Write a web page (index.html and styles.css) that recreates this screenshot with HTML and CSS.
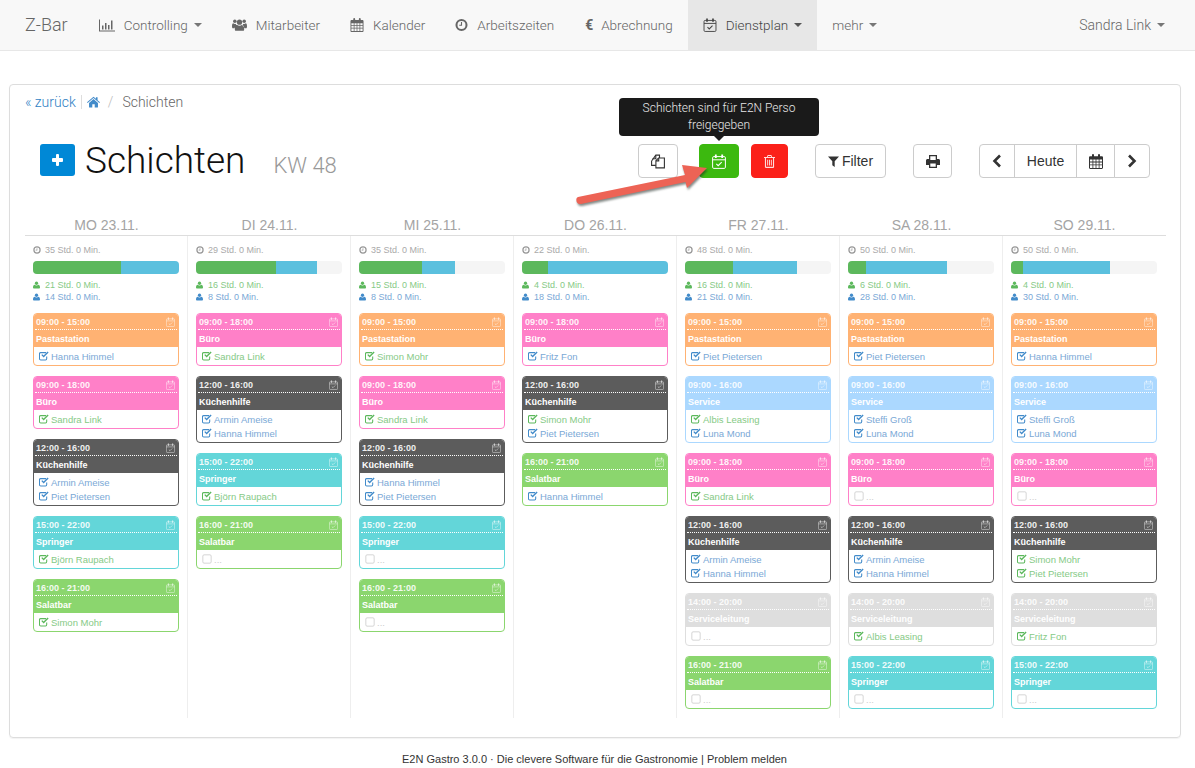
FILE: index.html
```html
<!DOCTYPE html>
<html lang="de">
<head>
<meta charset="utf-8">
<title>Schichten</title>
<link rel="stylesheet" href="styles.css">
</head>
<body>
<svg class="defs" width="0" height="0" aria-hidden="true">
  <symbol id="i-bars" viewBox="0 0 16 13"><path d="M0 1h1v11h15v1H0z"/><path d="M3 7h1.500v4H3zM6 4.500h1.500V11H6zM9 6.500h1.500V11H9zM12 2h1.500v9H12z"/></symbol>
  <symbol id="i-users" viewBox="0 0 16 14"><circle cx="8" cy="4" r="2.800"/><circle cx="3" cy="2.900" r="1.900"/><circle cx="13" cy="2.900" r="1.900"/><path d="M3.800 13c-.4 0-.8-.4-.8-1 0-3 .8-5 2.300-5.200.7.600 1.600 1 2.700 1s2-.4 2.700-1C12.200 7 13 9 13 12c0 .6-.4 1-.8 1zM0 8.500C0 6.500.5 5.200 1.400 5.200c.5.400 1 .6 1.700.6.500 0 .8-.1 1.100-.2-.1 1.200.5 1.700.8 2.200-.8.500-2 1.300-2.400 2.700H1C.4 10.500 0 9.600 0 8.500zM16 8.500c0-2-.5-3.300-1.400-3.300-.5.400-1 .6-1.700.6-.5 0-.8-.1-1.100-.2.100 1.200-.5 1.700-.8 2.200.8.500 2 1.300 2.400 2.700H15c.6 0 1-.9 1-2z"/></symbol>
  <symbol id="i-cal" viewBox="0 0 14 15"><path fill-rule="evenodd" d="M1.200 2.200H3V1a1 1 0 0 1 2 0v1.200h4V1a1 1 0 0 1 2 0v1.200h1.800c.6 0 1.200.5 1.200 1.100v10.500c0 .6-.6 1.200-1.200 1.200H1.200C.6 15 0 14.400 0 13.800V3.300C0 2.700.6 2.200 1.200 2.200zM1 5.600v2h2.500v-2zm3.300 0v2h2.300v-2zm3.100 0v2h2.300v-2zm3.100 0v2H13v-2zM1 8.400v2.100h2.500V8.400zm3.300 0v2.100h2.300V8.400zm3.100 0v2.100h2.300V8.400zm3.100 0v2.100H13V8.400zM1 11.300v2.500c0 .1.100.2.200.2h2.300v-2.700zm3.300 0V14h2.300v-2.700zm3.100 0V14h2.300v-2.700zm3.100 0V14h2.300c.1 0 .2-.1.200-.2v-2.500z"/></symbol>
  <symbol id="i-clock" viewBox="0 0 14 14"><path fill-rule="evenodd" d="M7 .5a6.500 6.500 0 1 1 0 13 6.500 6.500 0 0 1 0-13zm0 2.200a4.300 4.300 0 1 0 0 8.600 4.300 4.300 0 0 0 0-8.600z"/><path d="M6.400 3.800h1.200v3.900H4.600V6.600h1.800z"/></symbol>
  <symbol id="i-calcheck" viewBox="0 0 14 15"><g fill="none" stroke="currentColor"><rect x=".6" y="2.600" width="12.800" height="11.800" rx="1.200"/><path d="M.6 5.800h12.800"/><path stroke-width="1.800" d="M3.800.6v3.400M10.200.6v3.400"/><path stroke-width="1.100" d="M4.300 9.800l1.900 1.900 3.500-3.500"/></g></symbol>
  <symbol id="i-home" viewBox="0 0 16 14"><path d="M8 .5l3 2.600V1.300h2v3.500l3 2.600-.8.900L8 2.100.8 8.300 0 7.400z"/><path d="M8 3.300l5.500 4.800V13c0 .4-.3.700-.7.700H9.500V9.800h-3v3.900H3.200c-.4 0-.7-.3-.7-.7V8.100z"/></symbol>
  <symbol id="i-copy" viewBox="0 0 14 14"><g fill="none" stroke="currentColor" stroke-width="1.100"><path d="M.6 6.500L4.800.6h3.700v3M.6 6.500v4.400h4.200"/><path d="M4.900 6.200l2.700-2.700h5.800v9.900H4.900z"/><path d="M4.800 .8v3.500H1.500M7.700 3.700v2.700H5"/></g></symbol>
  <symbol id="i-trash" viewBox="0 0 12 14"><path fill-rule="evenodd" d="M4 0h4l.8 2H12v1.200h-1V13c0 .6-.5 1-1 1H2c-.5 0-1-.4-1-1V3.200H0V2h3.200zm.5 1L4.200 2h3.600l-.3-1zM2.200 3.200v9.600h7.600V3.200z"/><path d="M3.500 5h1v6.500h-1zM5.500 5h1v6.500h-1zM7.500 5h1v6.500h-1z"/></symbol>
  <symbol id="i-filter" viewBox="0 0 12 12"><path d="M0 .5h12L7.300 5.700V12L4.700 10V5.700z"/></symbol>
  <symbol id="i-print" viewBox="0 0 14 13"><path fill-rule="evenodd" d="M3 0h8v4h1.500c.8 0 1.500.7 1.500 1.500V10h-3v3H3v-3H0V5.500C0 4.700.7 4 1.500 4H3zm1.300 1.200V5h5.400V1.200zm0 7.300v3.300h5.400V8.500z"/></symbol>
  <symbol id="i-left" viewBox="0 0 10 14"><path fill="none" stroke="currentColor" stroke-width="2.600" d="M8 1.500L2.500 7 8 12.500"/></symbol>
  <symbol id="i-right" viewBox="0 0 10 14"><path fill="none" stroke="currentColor" stroke-width="2.600" d="M2 1.500L7.500 7 2 12.500"/></symbol>
  <symbol id="i-user" viewBox="0 0 12 12"><circle cx="6" cy="3" r="2.800"/><path d="M1.400 12C.6 12 0 11.500 0 10.700 0 8 .8 6 2.700 5.700 3.500 6.500 4.700 7 6 7s2.500-.5 3.300-1.300C11.200 6 12 8 12 10.700c0 .8-.6 1.300-1.400 1.300z"/></symbol>
  <symbol id="i-check" viewBox="0 0 13 12"><path fill="none" stroke="currentColor" stroke-width="1.400" d="M10 6.800v2.700c0 .9-.7 1.600-1.500 1.600H2.200c-.9 0-1.600-.7-1.600-1.600V3.200c0-.9.700-1.600 1.600-1.600h7"/><path d="M3 4.800l1.200-1.200L6 5.400l5.200-5.200L12.500 1.500 6 8z"/></symbol>
  <symbol id="i-box" viewBox="0 0 12 12"><rect x="1" y="1" width="10" height="10" rx="1.500" fill="none" stroke="currentColor"/></symbol>
</svg>

<nav class="navbar">
  <a class="brand">Z-Bar</a>
  <a class="nav-item"><svg class="ico w16"><use href="#i-bars"/></svg>Controlling<i class="caret"></i></a>
  <a class="nav-item"><svg class="ico w15"><use href="#i-users"/></svg>Mitarbeiter</a>
  <a class="nav-item"><svg class="ico w14"><use href="#i-cal"/></svg>Kalender</a>
  <a class="nav-item"><svg class="ico w13"><use href="#i-clock"/></svg>Arbeitszeiten</a>
  <a class="nav-item"><span class="euro">€</span>Abrechnung</a>
  <a class="nav-item active"><svg class="ico w14"><use href="#i-calcheck"/></svg>Dienstplan<i class="caret"></i></a>
  <a class="nav-item">mehr<i class="caret"></i></a>
  <a class="nav-item nav-right">Sandra Link<i class="caret"></i></a>
</nav>

<main class="panel">
  <div class="crumbs">
    <a class="link">« zurück</a><span class="crumb-bar"></span>
    <svg class="home"><use href="#i-home"/></svg>
    <span class="crumb-sep">/</span>
    <span class="crumb-cur">Schichten</span>
  </div>

  <header class="toolbar">
    <button class="add"><span class="add-h"></span><span class="add-v"></span></button>
    <h1 class="title">Schichten</h1>
    <span class="week">KW 48</span>
    <div class="actions">
      <button class="btn b-copy"><svg class="ico14"><use href="#i-copy"/></svg></button>
      <button class="btn b-green"><svg class="ico14"><use href="#i-calcheck"/></svg></button>
      <button class="btn b-red"><svg class="ico-trash"><use href="#i-trash"/></svg></button>
      <button class="btn b-filter"><svg class="ico-filter"><use href="#i-filter"/></svg>Filter</button>
      <button class="btn b-print"><svg class="ico13"><use href="#i-print"/></svg></button>
      <div class="btn-group">
        <button class="seg s-prev"><svg class="chev"><use href="#i-left"/></svg></button>
        <button class="seg s-today">Heute</button>
        <button class="seg s-cal"><svg class="ico14"><use href="#i-cal"/></svg></button>
        <button class="seg s-next"><svg class="chev"><use href="#i-right"/></svg></button>
      </div>
    </div>
    <div class="tooltip">Schichten sind für E2N Perso freigegeben</div>
    <svg class="arrow" width="150" height="60" viewBox="0 0 150 60"><path class="arrow-body" d="M3 37L110 15 107 5 132 8 112 28 110.500 22 6 44C1 45 0 38 3 37z"/></svg>
  </header>

  <div class="week-grid">
    <div class="day-head">MO 23.11.</div>
    <div class="day-head">DI 24.11.</div>
    <div class="day-head">MI 25.11.</div>
    <div class="day-head">DO 26.11.</div>
    <div class="day-head">FR 27.11.</div>
    <div class="day-head">SA 28.11.</div>
    <div class="day-head">SO 29.11.</div>

    <!-- MO -->
    <section class="day">
      <div class="total"><svg><use href="#i-clock"/></svg>35 Std. 0 Min.</div>
      <div class="bar"><span class="bar-g" style="width:60%"></span><span class="bar-b" style="width:40%"></span></div>
      <div class="sum g"><svg><use href="#i-user"/></svg>21 Std. 0 Min.</div>
      <div class="sum b"><svg><use href="#i-user"/></svg>14 Std. 0 Min.</div>
      <article class="shift orange"><div class="head"><div class="time">09:00 - 15:00<svg><use href="#i-calcheck"/></svg></div><div class="role">Pastastation</div></div><ul class="staff"><li class="b"><svg><use href="#i-check"/></svg>Hanna Himmel</li></ul></article>
      <article class="shift pink"><div class="head"><div class="time">09:00 - 18:00<svg><use href="#i-calcheck"/></svg></div><div class="role">Büro</div></div><ul class="staff"><li class="g"><svg><use href="#i-check"/></svg>Sandra Link</li></ul></article>
      <article class="shift dark"><div class="head"><div class="time">12:00 - 16:00<svg><use href="#i-calcheck"/></svg></div><div class="role">Küchenhilfe</div></div><ul class="staff"><li class="b"><svg><use href="#i-check"/></svg>Armin Ameise</li><li class="b"><svg><use href="#i-check"/></svg>Piet Pietersen</li></ul></article>
      <article class="shift teal"><div class="head"><div class="time">15:00 - 22:00<svg><use href="#i-calcheck"/></svg></div><div class="role">Springer</div></div><ul class="staff"><li class="g"><svg><use href="#i-check"/></svg>Björn Raupach</li></ul></article>
      <article class="shift green"><div class="head"><div class="time">16:00 - 21:00<svg><use href="#i-calcheck"/></svg></div><div class="role">Salatbar</div></div><ul class="staff"><li class="g"><svg><use href="#i-check"/></svg>Simon Mohr</li></ul></article>
    </section>

    <!-- DI -->
    <section class="day">
      <div class="total"><svg><use href="#i-clock"/></svg>29 Std. 0 Min.</div>
      <div class="bar"><span class="bar-g" style="width:55%"></span><span class="bar-b" style="width:28%"></span></div>
      <div class="sum g"><svg><use href="#i-user"/></svg>16 Std. 0 Min.</div>
      <div class="sum b"><svg><use href="#i-user"/></svg>8 Std. 0 Min.</div>
      <article class="shift pink"><div class="head"><div class="time">09:00 - 18:00<svg><use href="#i-calcheck"/></svg></div><div class="role">Büro</div></div><ul class="staff"><li class="g"><svg><use href="#i-check"/></svg>Sandra Link</li></ul></article>
      <article class="shift dark"><div class="head"><div class="time">12:00 - 16:00<svg><use href="#i-calcheck"/></svg></div><div class="role">Küchenhilfe</div></div><ul class="staff"><li class="b"><svg><use href="#i-check"/></svg>Armin Ameise</li><li class="b"><svg><use href="#i-check"/></svg>Hanna Himmel</li></ul></article>
      <article class="shift teal"><div class="head"><div class="time">15:00 - 22:00<svg><use href="#i-calcheck"/></svg></div><div class="role">Springer</div></div><ul class="staff"><li class="g"><svg><use href="#i-check"/></svg>Björn Raupach</li></ul></article>
      <article class="shift green"><div class="head"><div class="time">16:00 - 21:00<svg><use href="#i-calcheck"/></svg></div><div class="role">Salatbar</div></div><ul class="staff"><li class="e"><svg><use href="#i-box"/></svg>...</li></ul></article>
    </section>

    <!-- MI -->
    <section class="day">
      <div class="total"><svg><use href="#i-clock"/></svg>35 Std. 0 Min.</div>
      <div class="bar"><span class="bar-g" style="width:43%"></span><span class="bar-b" style="width:23%"></span></div>
      <div class="sum g"><svg><use href="#i-user"/></svg>15 Std. 0 Min.</div>
      <div class="sum b"><svg><use href="#i-user"/></svg>8 Std. 0 Min.</div>
      <article class="shift orange"><div class="head"><div class="time">09:00 - 15:00<svg><use href="#i-calcheck"/></svg></div><div class="role">Pastastation</div></div><ul class="staff"><li class="g"><svg><use href="#i-check"/></svg>Simon Mohr</li></ul></article>
      <article class="shift pink"><div class="head"><div class="time">09:00 - 18:00<svg><use href="#i-calcheck"/></svg></div><div class="role">Büro</div></div><ul class="staff"><li class="g"><svg><use href="#i-check"/></svg>Sandra Link</li></ul></article>
      <article class="shift dark"><div class="head"><div class="time">12:00 - 16:00<svg><use href="#i-calcheck"/></svg></div><div class="role">Küchenhilfe</div></div><ul class="staff"><li class="b"><svg><use href="#i-check"/></svg>Hanna Himmel</li><li class="b"><svg><use href="#i-check"/></svg>Piet Pietersen</li></ul></article>
      <article class="shift teal"><div class="head"><div class="time">15:00 - 22:00<svg><use href="#i-calcheck"/></svg></div><div class="role">Springer</div></div><ul class="staff"><li class="e"><svg><use href="#i-box"/></svg>...</li></ul></article>
      <article class="shift green"><div class="head"><div class="time">16:00 - 21:00<svg><use href="#i-calcheck"/></svg></div><div class="role">Salatbar</div></div><ul class="staff"><li class="e"><svg><use href="#i-box"/></svg>...</li></ul></article>
    </section>

    <!-- DO -->
    <section class="day">
      <div class="total"><svg><use href="#i-clock"/></svg>22 Std. 0 Min.</div>
      <div class="bar"><span class="bar-g" style="width:18%"></span><span class="bar-b" style="width:82%"></span></div>
      <div class="sum g"><svg><use href="#i-user"/></svg>4 Std. 0 Min.</div>
      <div class="sum b"><svg><use href="#i-user"/></svg>18 Std. 0 Min.</div>
      <article class="shift pink"><div class="head"><div class="time">09:00 - 18:00<svg><use href="#i-calcheck"/></svg></div><div class="role">Büro</div></div><ul class="staff"><li class="b"><svg><use href="#i-check"/></svg>Fritz Fon</li></ul></article>
      <article class="shift dark"><div class="head"><div class="time">12:00 - 16:00<svg><use href="#i-calcheck"/></svg></div><div class="role">Küchenhilfe</div></div><ul class="staff"><li class="g"><svg><use href="#i-check"/></svg>Simon Mohr</li><li class="b"><svg><use href="#i-check"/></svg>Piet Pietersen</li></ul></article>
      <article class="shift green"><div class="head"><div class="time">16:00 - 21:00<svg><use href="#i-calcheck"/></svg></div><div class="role">Salatbar</div></div><ul class="staff"><li class="b"><svg><use href="#i-check"/></svg>Hanna Himmel</li></ul></article>
    </section>

    <!-- FR -->
    <section class="day">
      <div class="total"><svg><use href="#i-clock"/></svg>48 Std. 0 Min.</div>
      <div class="bar"><span class="bar-g" style="width:33%"></span><span class="bar-b" style="width:44%"></span></div>
      <div class="sum g"><svg><use href="#i-user"/></svg>16 Std. 0 Min.</div>
      <div class="sum b"><svg><use href="#i-user"/></svg>21 Std. 0 Min.</div>
      <article class="shift orange"><div class="head"><div class="time">09:00 - 15:00<svg><use href="#i-calcheck"/></svg></div><div class="role">Pastastation</div></div><ul class="staff"><li class="b"><svg><use href="#i-check"/></svg>Piet Pietersen</li></ul></article>
      <article class="shift sky"><div class="head"><div class="time">09:00 - 16:00<svg><use href="#i-calcheck"/></svg></div><div class="role">Service</div></div><ul class="staff"><li class="g"><svg><use href="#i-check"/></svg>Albis Leasing</li><li class="b"><svg><use href="#i-check"/></svg>Luna Mond</li></ul></article>
      <article class="shift pink"><div class="head"><div class="time">09:00 - 18:00<svg><use href="#i-calcheck"/></svg></div><div class="role">Büro</div></div><ul class="staff"><li class="g"><svg><use href="#i-check"/></svg>Sandra Link</li></ul></article>
      <article class="shift dark"><div class="head"><div class="time">12:00 - 16:00<svg><use href="#i-calcheck"/></svg></div><div class="role">Küchenhilfe</div></div><ul class="staff"><li class="b"><svg><use href="#i-check"/></svg>Armin Ameise</li><li class="b"><svg><use href="#i-check"/></svg>Hanna Himmel</li></ul></article>
      <article class="shift grey"><div class="head"><div class="time">14:00 - 20:00<svg><use href="#i-calcheck"/></svg></div><div class="role">Serviceleitung</div></div><ul class="staff"><li class="e"><svg><use href="#i-box"/></svg>...</li></ul></article>
      <article class="shift green"><div class="head"><div class="time">16:00 - 21:00<svg><use href="#i-calcheck"/></svg></div><div class="role">Salatbar</div></div><ul class="staff"><li class="e"><svg><use href="#i-box"/></svg>...</li></ul></article>
    </section>

    <!-- SA -->
    <section class="day">
      <div class="total"><svg><use href="#i-clock"/></svg>50 Std. 0 Min.</div>
      <div class="bar"><span class="bar-g" style="width:12%"></span><span class="bar-b" style="width:56%"></span></div>
      <div class="sum g"><svg><use href="#i-user"/></svg>6 Std. 0 Min.</div>
      <div class="sum b"><svg><use href="#i-user"/></svg>28 Std. 0 Min.</div>
      <article class="shift orange"><div class="head"><div class="time">09:00 - 15:00<svg><use href="#i-calcheck"/></svg></div><div class="role">Pastastation</div></div><ul class="staff"><li class="b"><svg><use href="#i-check"/></svg>Piet Pietersen</li></ul></article>
      <article class="shift sky"><div class="head"><div class="time">09:00 - 16:00<svg><use href="#i-calcheck"/></svg></div><div class="role">Service</div></div><ul class="staff"><li class="b"><svg><use href="#i-check"/></svg>Steffi Groß</li><li class="b"><svg><use href="#i-check"/></svg>Luna Mond</li></ul></article>
      <article class="shift pink"><div class="head"><div class="time">09:00 - 18:00<svg><use href="#i-calcheck"/></svg></div><div class="role">Büro</div></div><ul class="staff"><li class="e"><svg><use href="#i-box"/></svg>...</li></ul></article>
      <article class="shift dark"><div class="head"><div class="time">12:00 - 16:00<svg><use href="#i-calcheck"/></svg></div><div class="role">Küchenhilfe</div></div><ul class="staff"><li class="b"><svg><use href="#i-check"/></svg>Armin Ameise</li><li class="b"><svg><use href="#i-check"/></svg>Hanna Himmel</li></ul></article>
      <article class="shift grey"><div class="head"><div class="time">14:00 - 20:00<svg><use href="#i-calcheck"/></svg></div><div class="role">Serviceleitung</div></div><ul class="staff"><li class="g"><svg><use href="#i-check"/></svg>Albis Leasing</li></ul></article>
      <article class="shift teal"><div class="head"><div class="time">15:00 - 22:00<svg><use href="#i-calcheck"/></svg></div><div class="role">Springer</div></div><ul class="staff"><li class="e"><svg><use href="#i-box"/></svg>...</li></ul></article>
    </section>

    <!-- SO -->
    <section class="day">
      <div class="total"><svg><use href="#i-clock"/></svg>50 Std. 0 Min.</div>
      <div class="bar"><span class="bar-g" style="width:8%"></span><span class="bar-b" style="width:60%"></span></div>
      <div class="sum g"><svg><use href="#i-user"/></svg>4 Std. 0 Min.</div>
      <div class="sum b"><svg><use href="#i-user"/></svg>30 Std. 0 Min.</div>
      <article class="shift orange"><div class="head"><div class="time">09:00 - 15:00<svg><use href="#i-calcheck"/></svg></div><div class="role">Pastastation</div></div><ul class="staff"><li class="b"><svg><use href="#i-check"/></svg>Hanna Himmel</li></ul></article>
      <article class="shift sky"><div class="head"><div class="time">09:00 - 16:00<svg><use href="#i-calcheck"/></svg></div><div class="role">Service</div></div><ul class="staff"><li class="b"><svg><use href="#i-check"/></svg>Steffi Groß</li><li class="b"><svg><use href="#i-check"/></svg>Luna Mond</li></ul></article>
      <article class="shift pink"><div class="head"><div class="time">09:00 - 18:00<svg><use href="#i-calcheck"/></svg></div><div class="role">Büro</div></div><ul class="staff"><li class="e"><svg><use href="#i-box"/></svg>...</li></ul></article>
      <article class="shift dark"><div class="head"><div class="time">12:00 - 16:00<svg><use href="#i-calcheck"/></svg></div><div class="role">Küchenhilfe</div></div><ul class="staff"><li class="g"><svg><use href="#i-check"/></svg>Simon Mohr</li><li class="g"><svg><use href="#i-check"/></svg>Piet Pietersen</li></ul></article>
      <article class="shift grey"><div class="head"><div class="time">14:00 - 20:00<svg><use href="#i-calcheck"/></svg></div><div class="role">Serviceleitung</div></div><ul class="staff"><li class="g"><svg><use href="#i-check"/></svg>Fritz Fon</li></ul></article>
      <article class="shift teal"><div class="head"><div class="time">15:00 - 22:00<svg><use href="#i-calcheck"/></svg></div><div class="role">Springer</div></div><ul class="staff"><li class="e"><svg><use href="#i-box"/></svg>...</li></ul></article>
    </section>
  </div>
</main>

<footer class="footer">E2N Gastro 3.0.0 · Die clevere Software für die Gastronomie | Problem melden</footer>
</body>
</html>
```

FILE: styles.css
```css
* { box-sizing: border-box; }
html, body { margin: 0; padding: 0; }
body {
  background: #fff;
  color: #333;
  font-family: "Liberation Sans", Arial, sans-serif;
  font-size: 14px;
  overflow: hidden;
  height: 768px;
}
svg { fill: currentColor; flex: none; }
.defs { position: absolute; }

/* navbar */
.navbar {
  display: flex;
  height: 51px;
  background: #f8f8f8;
  border-bottom: 1px solid #e7e7e7;
  color: #666;
  font-family: Roboto, "Liberation Sans", sans-serif;
  font-size: 13.500px;
  font-weight: 300;
}
.brand { font-size: 18px; line-height: 50px; padding: 0 16px 0 25px; }
.nav-item {
  display: flex;
  align-items: center;
  height: 50px;
  padding: 0 15px;
  white-space: nowrap;
}
.ico { height: 14px; margin-right: 9px; }
.w16 { width: 16px; }
.w15 { width: 15px; }
.w14 { width: 14px; }
.w13 { width: 13px; }
.euro { width: 10px; margin-right: 7px; font-weight: 700; font-size: 14px; text-align: center; }
.caret {
  width: 0; height: 0;
  margin-left: 6px;
  border-top: 4px solid #777;
  border-left: 4px solid transparent;
  border-right: 4px solid transparent;
}
.active { background: #e7e7e7; color: #444; }
.active .caret { border-top-color: #555; }
.nav-right { margin-left: auto; padding-right: 30px; font-size: 14px; }

/* panel */
.panel {
  width: 1172px;
  height: 654px;
  margin: 33px 0 0 9px;
  padding: 7px 15px 0;
  border: 1px solid #ddd;
  border-radius: 4px;
  box-shadow: 0 1px 1px rgba(0, 0, 0, .05);
}
.crumbs {
  display: flex;
  align-items: center;
  height: 20px;
  color: #666;
  font-family: Roboto, "Liberation Sans", sans-serif;
  font-weight: 300;
}
.link { color: #2f7fc4; }
.crumb-bar { width: 1px; height: 14px; background: #ddd; margin: 0 5px; }
.home { width: 13px; height: 12px; color: #428bca; }
.crumb-sep { color: #bbb; margin: 0 9px 0 8px; }
.crumb-cur { color: #666; }

/* toolbar */
.toolbar {
  position: relative;
  display: flex;
  align-items: flex-start;
  height: 71px;
  margin-top: 32px;
  padding-left: 15px;
}
.add {
  position: relative;
  width: 35px;
  height: 32px;
  border: 0;
  padding: 0;
  border-radius: 3px;
  background: #0088d6;
}
.add-h, .add-v { position: absolute; background: #fff; border-radius: 1px; }
.add-h { left: 12px; top: 14px; width: 11px; height: 4px; }
.add-v { left: 16px; top: 10px; width: 3px; height: 12px; }
.title {
  margin: -3px 0 0 10px;
  font: 300 37px/40px Roboto, "Liberation Sans", sans-serif;
  color: #111;
}
.week {
  margin: 9px 0 0 28px;
  font: 300 22px/26px Roboto, "Liberation Sans", sans-serif;
  color: #999;
}
.actions {
  display: flex;
  margin-left: auto;
  margin-right: 15px;
}
.btn, .seg {
  display: flex;
  align-items: center;
  justify-content: center;
  height: 34px;
  padding: 0;
  background: #fff;
  color: #333;
  font: 14px "Liberation Sans", sans-serif;
  border: 1px solid #ccc;
  border-radius: 4px;
}
.b-copy { width: 40px; }
.b-green { width: 40px; margin-left: 21px; background: #3cb90f; border-color: #3cb90f; color: #fff; }
.b-red { width: 37px; margin-left: 12px; background: #fb2019; border-color: #fb2019; color: #fff; }
.b-filter { width: 71px; margin-left: 27px; }
.b-print { width: 39px; margin-left: 27px; }
.ico14 { width: 14px; height: 15px; }
.ico13 { width: 14px; height: 13px; }
.ico-trash { width: 11px; height: 13px; opacity: .85; }
.ico-filter { width: 11px; height: 11px; margin-right: 3px; }
.chev { width: 10px; height: 14px; }
.btn-group { display: flex; margin-left: 27px; }
.seg { border-radius: 0; margin-left: -1px; }
.s-prev { width: 36px; margin-left: 0; border-radius: 4px 0 0 4px; }
.s-today { width: 63px; }
.s-cal { width: 39px; }
.s-next { width: 36px; border-radius: 0 4px 4px 0; }

.tooltip {
  position: absolute;
  left: 594px;
  top: -46px;
  width: 200px;
  height: 38px;
  padding: 2px 10px 0;
  background: #1a1a1a;
  color: #e8e8e8;
  border-radius: 4px;
  font: 300 12px/17px Roboto, "Liberation Sans", sans-serif;
  text-align: center;
}
.tooltip::after {
  content: "";
  position: absolute;
  left: 95px;
  top: 38px;
  border-top: 5px solid #1a1a1a;
  border-left: 5px solid transparent;
  border-right: 5px solid transparent;
}
.arrow {
  position: absolute;
  left: 550px;
  top: 16px;
  pointer-events: none;
  filter: drop-shadow(1px 2px 1px rgba(30, 40, 35, .55));
}
.arrow-body { fill: #ed6355; }

/* week grid */
.week-grid {
  display: grid;
  grid-template-columns: repeat(7, 163px);
  grid-template-rows: 21px 482px;
  margin-right: -1px;
}
.day-head {
  text-align: center;
  font-size: 14px;
  line-height: 20px;
  color: #a4a4a4;
  border-bottom: 1px solid #ddd;
}
.day { margin-left: -1px; padding: 8px 9px 0 8px; border-left: 1px solid #eee; }
.day:first-of-type { margin-left: 0; border-left: 0; }
.total, .sum {
  display: flex;
  align-items: center;
  height: 12px;
  font-size: 9px;
  color: #aaa;
}
.total svg { width: 8px; height: 8px; margin-right: 4px; color: #999; }
.bar {
  display: flex;
  height: 13px;
  margin: 5px 0 5px;
  background: #f5f5f5;
  border-radius: 4px;
  overflow: hidden;
}
.bar-g { background: #5cb85c; }
.bar-b { background: #5bc0de; }
.sum.g { color: #86ca86; }
.sum.b { color: #7aa8d6; }
.sum svg { width: 7px; height: 8px; margin-right: 5px; }
.sum.g svg { color: #5cb85c; }
.sum.b svg { color: #428bca; }

/* shift card */
.shift {
  margin-top: 10px;
  border: 1px solid var(--c);
  border-radius: 4px;
  overflow: hidden;
  background: #fff;
}
.head { background: var(--c); color: #fff; padding: 0 1px; margin: -1px -1px 0; font-size: 9px; font-weight: 700; }
.time {
  display: flex;
  align-items: center;
  justify-content: space-between;
  height: 17px;
  padding: 1px 1px 0;
  border-bottom: 1px dotted #fff;
  margin: 0 1px;
  color: rgba(255, 255, 255, .92);
}
.time svg { width: 9px; height: 10px; opacity: .75; margin-right: 1px; }
.role { height: 17px; line-height: 19px; padding-left: 2px; }
.staff { list-style: none; margin: 0; padding: 2px 5px 2px; font-size: 9.500px; }
.staff li { display: flex; align-items: center; height: 14px; }
.staff svg { width: 10px; height: 10px; margin-right: 2px; }
.staff .g { color: #86ca86; }
.staff .g svg { color: #5cb85c; }
.staff .b { color: #7aa8d6; }
.staff .b svg { color: #428bca; }
.staff .e { color: #ccc; }
.orange { --c: #ffb273; }
.pink { --c: #ff80c8; }
.dark { --c: #5c5c5c; }
.teal { --c: #63d6d9; }
.green { --c: #8bd66e; }
.sky { --c: #abd8ff; }
.grey { --c: #dedede; }

.footer {
  margin-top: 14px;
  padding-right: 6px;
  text-align: center;
  font-size: 11px;
  line-height: 14px;
  color: #333;
}
```
